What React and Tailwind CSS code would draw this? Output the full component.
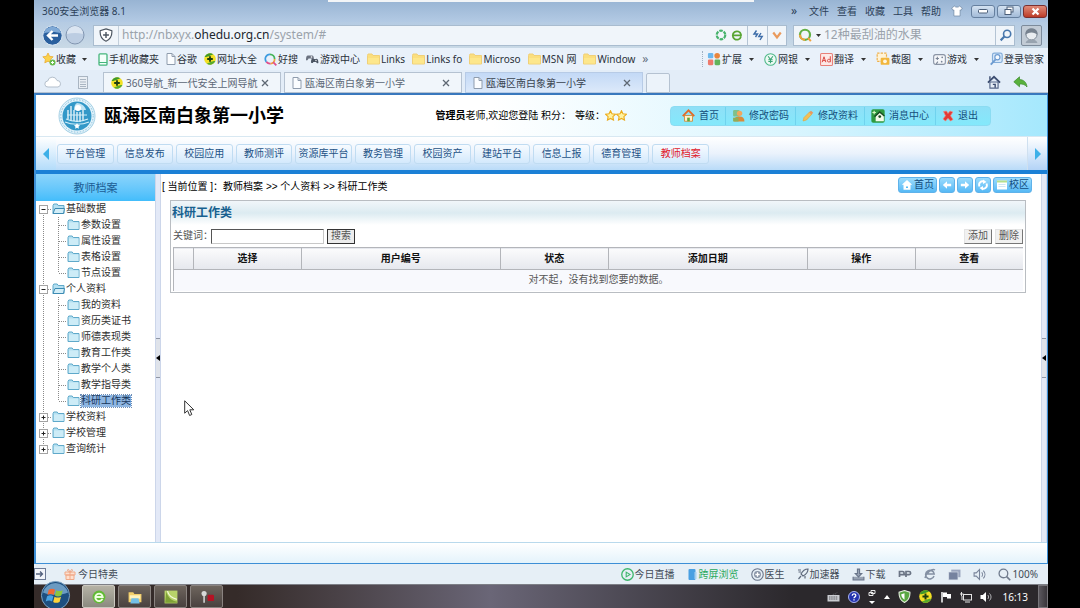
import React, { useState } from 'react';
import { clsx } from 'clsx';

/* ---------- icons ---------- */

const Svg = ({ size = 12, w, h, vb = '0 0 12 12', children, className }) => (
  <svg width={w || size} height={h || size} viewBox={vb} fill="none" className={clsx('shrink-0', className)} aria-hidden="true">
    {children}
  </svg>
);

const FolderIcon = () => (
  <Svg w={13} h={12} vb="0 0 13 12">
    <path d="M.5 2.5 1 1h4l1 1.500h6.500v8.500H.5z" fill="#fbdf7e" stroke="#f0d078" />
    <path d="M1 5h11v5.500H1z" fill="#fde78c" />
  </Svg>
);

const PageIcon = ({ color = '#8f9cad' }) => (
  <Svg w={10} h={12} vb="0 0 10 12">
    <path d="M1 .5h5l3 3v8H1z" fill="#fbfdff" stroke={color} />
    <path d="M6 .5v3h3" stroke={color} />
  </Svg>
);

const Plus360 = ({ size = 12 }) => (
  <Svg size={size}>
    <circle cx="6" cy="6" r="5.800" fill="#f2e024" />
    <path d="M.6 4A5.800 5.800 0 0 1 9.500 1.500C7 1.500 5.500 4 .6 4z" fill="#3f9a2b" />
    <path d="M11.400 8A5.800 5.800 0 0 1 2.500 10.500C5 10.500 6.500 8 11.400 8z" fill="#58ab2d" />
    <path d="M6 3.200v5.600M3.200 6h5.600" stroke="#1d3d10" strokeWidth="1.800" />
  </Svg>
);

const FavStar = () => (
  <Svg size={14} vb="0 0 14 14">
    <path d="m6 1 1.600 3.300 3.600.500-2.600 2.500.600 3.600L6 9.200l-3.200 1.700.600-3.600L.800 4.800l3.600-.500z" fill="#fbd24c" stroke="#e8a62b" strokeWidth=".7" />
    <circle cx="10.500" cy="10.500" r="3" fill="#69bb4d" />
    <path d="M9 10.500h3M10.500 9v3" stroke="#fff" />
  </Svg>
);

const PhoneIcon = () => (
  <Svg w={10} h={13} vb="0 0 10 13">
    <rect x="1" y=".8" width="8" height="11.400" rx="1" stroke="#45b57c" strokeWidth="1.300" fill="#f4fffa" />
    <path d="M1 9.500h8" stroke="#45b57c" />
  </Svg>
);

const RingSearch = ({ size = 13 }) => (
  <Svg size={size}>
    <path d="M2.200 8.200A4.300 4.300 0 0 1 5.500 1.200" stroke="#3c9be0" strokeWidth="1.600" />
    <path d="M5.500 1.200A4.300 4.300 0 0 1 9.800 5.500" stroke="#46b45a" strokeWidth="1.600" />
    <path d="M9.800 5.500A4.300 4.300 0 0 1 6 9.800" stroke="#f0a03a" strokeWidth="1.600" />
    <path d="M6 9.800A4.300 4.300 0 0 1 2.200 8.200M8.400 8.400l3 3" stroke="#e0508c" strokeWidth="1.600" />
  </Svg>
);

const GamePads = () => (
  <Svg w={14} h={12} vb="0 0 14 12">
    <path d="M1 7c0-4 1-5 2.500-4.500h3C8 2 9 3 9 7c-1 1-2 0-2.500-1.500h-3C3 7 2 8 1 7z" fill="#6b7280" />
    <path d="M6 9.500c0-3 .800-4 2-3.600h3c1.500-.400 2.400 1 2.400 4-1 1-1.800.200-2.300-1H8.400c-.600 1.400-1.500 1.500-2.400.600z" fill="#4b5563" />
    <circle cx="6.500" cy="4" r=".8" fill="#fff" /><circle cx="11" cy="7.500" r=".7" fill="#fff" />
  </Svg>
);

const BlocksIcon = () => (
  <Svg size={14}>
    <rect x=".8" y=".8" width="4.600" height="4.600" rx="1" fill="#6cb8ec" />
    <circle cx="8.700" cy="3.200" r="2.400" fill="#e8853d" />
    <rect x=".8" y="6.500" width="4.600" height="4.800" rx="1" fill="#ee7a6c" />
    <rect x="6.500" y="6.500" width="4.800" height="4.800" rx="1" fill="#62b45c" />
  </Svg>
);

const YenIcon = () => (
  <Svg size={13}>
    <circle cx="6" cy="6" r="5.300" stroke="#4fb98a" fill="#eefaf4" />
    <path d="m3.800 3 2.200 3 2.200-3M6 6v3.500M4 6.300h4M4 7.900h4" stroke="#3ca577" />
  </Svg>
);

const DictIcon = () => (
  <Svg size={13}>
    <rect x=".5" y=".5" width="11" height="11" rx="1" fill="#fde9e7" stroke="#e88079" />
    <path d="m2 8.500 1.700-5 1.700 5M2.600 7h2.200M9.500 3v5.500M9.500 6.500c-.500-1-2.700-1-2.700.600 0 1.500 2.200 1.500 2.700.400" stroke="#d9453f" strokeWidth=".9" />
  </Svg>
);

const CropIcon = () => (
  <Svg size={14}>
    <rect x="1" y="1" width="8" height="7" fill="#fff3d6" stroke="#eeb04c" strokeDasharray="2 1" />
    <rect x="4" y="5" width="7.500" height="6" rx="1" fill="#f2b63c" />
    <circle cx="7.700" cy="8" r="1.600" fill="#fff6e0" />
  </Svg>
);

const DiceIcon = () => (
  <Svg size={13}>
    <rect x=".6" y="1.500" width="10.800" height="9" rx="2" fill="#f5f7fa" stroke="#8a94a5" />
    <path d="M2.500 5h3M4 3.500v3" stroke="#7a8495" /><circle cx="8.500" cy="4" r=".8" fill="#7a8495" />
    <circle cx="8" cy="8" r=".8" fill="#7a8495" /><path d="M3 10l1.500-2" stroke="#7a8495" />
  </Svg>
);

const LoginIcon = () => (
  <Svg size={14}>
    <rect x="3" y="1" width="8.300" height="8" rx="1.500" fill="#d9e9fa" stroke="#83add9" />
    <circle cx="7.200" cy="4.500" r="2.200" fill="#f5faff" stroke="#6d9bd0" />
    <path d="m5.500 6.500-4 4.300" stroke="#6d9bd0" strokeWidth="1.600" />
  </Svg>
);

const HomeColor = ({ size = 13 }) => (
  <Svg size={size}>
    <path d="M2.300 6h7.400v5.300H2.300z" fill="#fff0c9" stroke="#d18a35" strokeWidth=".8" />
    <path d="M.7 6.500 6 1.200l5.300 5.300" stroke="#e26b28" strokeWidth="1.700" />
    <path d="M4.800 8h2.400v3.300H4.800z" fill="#5ba53b" />
  </Svg>
);

const UserColor = () => (
  <Svg size={13}>
    <rect x="1" y="1" width="6" height="6" rx="1" fill="#7fc08b" />
    <circle cx="7" cy="4" r="2.500" fill="#f0a75e" /><path d="M2 11.500C2 7.500 4 7 7 7s4.500 1.500 4.500 4.500z" fill="#d98b3b" />
    <path d="M1 8h5v3.500H1z" fill="#8dae5a" />
  </Svg>
);

const PencilColor = () => (
  <Svg size={12}>
    <path d="M1 11 2 7.500 7.500 2l2.300 2.200L4.500 10z" fill="#f2c055" stroke="#e0a23a" strokeWidth=".6" />
    <path d="M7 2.500 9 .8l2.300 2L9.600 4.600z" fill="#e8995f" />
  </Svg>
);

const MsgColor = () => (
  <Svg size={14}>
    <rect x=".3" y=".3" width="11.400" height="11.400" rx="1.500" fill="#2f9a3f" />
    <path d="M4 10.500V6l3.500-3L11 6v4.500z" fill="#f3fbe9" />
    <path d="m3 6.500 4.500-4L11.500 6" stroke="#1b4e23" strokeWidth="1.300" />
    <circle cx="7.500" cy="6.500" r="1.200" fill="#1b4e23" />
    <path d="M1.200 3h3M2.700 1.500v3" stroke="#d8f7c2" />
  </Svg>
);

const CrossColor = () => (
  <Svg size={12}>
    <path d="m1.500 1.500 3-.5L6 3.500 8 1l2.800 1L8.500 5.800 11 9.500 8.500 11 6 8.300 3.500 11 1 9l2.500-3.200z" fill="#e23b36" stroke="#f08a80" strokeWidth=".7" />
  </Svg>
);

const GoldStar = () => (
  <Svg size={11}>
    <path d="m6 .8 1.600 3.400 3.700.500-2.700 2.600.700 3.700L6 9.200 2.700 11l.700-3.700L.700 4.700l3.700-.500z" fill="#fff3a0" stroke="#ecab1c" strokeWidth="1.200" />
  </Svg>
);

const SchoolLogo = () => (
  <Svg size={38} vb="0 0 38 38">
    <circle cx="19" cy="19" r="18" fill="#e3f3fb" stroke="#a5d0e5" />
    <circle cx="19" cy="19" r="16.200" stroke="#86bfdb" strokeDasharray="1.500 1.500" />
    <circle cx="19" cy="19" r="14.500" fill="#3398c8" />
    <path d="M19 6c4 0 8 3 9 7H16c0-3 1-6 3-7z" fill="#bfe4f4" />
    <circle cx="20" cy="11" r="3" fill="#fff" />
    <path d="M13 9v15M16 13v11M19 15v10M22 15v10M25 13v11M10 13v9" stroke="#fff" strokeWidth="1.200" />
    <path d="M9 18h20M8 22c7 3 15 3 22 0M7 25c7 3 17 3 24 0" stroke="#d3effa" strokeWidth="1.200" />
    <path d="m19 26 1 2 2 .3-1.500 1.400.4 2.100-1.900-1-1.900 1 .4-2.100L16 28.300l2-.3z" fill="#fff" />
  </Svg>
);

const TreeFolder = ({ open }) => (
  <Svg w={13} h={12} vb="0 0 13 12">
    <path d="M1 2.500 1.800 1h3.400l1 1.500H12v8H1z" fill="#b5e0f1" stroke="#5fa9ca" />
    {open
      ? <path d="M1 10.500 3 5.500h9.500l-1 5z" fill="#d3eef8" stroke="#3c8bb3" />
      : <path d="M2 3.500h9.500V10H2z" fill="#cdecf7" />}
  </Svg>
);

const Caret = () => (
  <Svg w={5} h={3} vb="0 0 5 3"><path d="M0 0h5L2.500 3z" fill="#333" /></Svg>
);

/* ---------- data ---------- */

const MENU = ['文件', '查看', '收藏', '工具', '帮助'];

const BOOKMARKS = [
  { label: '手机收藏夹', icon: PhoneIcon },
  { label: '谷歌', icon: PageIcon },
  { label: '网址大全', icon: Plus360 },
  { label: '好搜', icon: RingSearch },
  { label: '游戏中心', icon: GamePads },
  { label: 'Links', icon: FolderIcon },
  { label: 'Links fo', icon: FolderIcon },
  { label: 'Microso', icon: FolderIcon },
  { label: 'MSN 网', icon: FolderIcon },
  { label: 'Window', icon: FolderIcon },
];

const TOOLS = [
  { label: '扩展', icon: BlocksIcon, caret: true },
  { label: '网银', icon: YenIcon, caret: true },
  { label: '翻译', icon: DictIcon, caret: true },
  { label: '截图', icon: CropIcon, caret: true },
  { label: '游戏', icon: DiceIcon, caret: true },
  { label: '登录管家', icon: LoginIcon },
];

const TABS = [
  { label: '360导航_新一代安全上网导航', icon: Plus360 },
  { label: '瓯海区南白象第一小学', icon: PageIcon },
  { label: '瓯海区南白象第一小学', icon: PageIcon, active: true },
];

const QUICK = [
  { label: '首页', icon: HomeColor },
  { label: '修改密码', icon: UserColor },
  { label: '修改资料', icon: PencilColor },
  { label: '消息中心', icon: MsgColor },
  { label: '退出', icon: CrossColor },
];

const NAV = ['平台管理', '信息发布', '校园应用', '教师测评', '资源库平台', '教务管理', '校园资产', '建站平台', '信息上报', '德育管理', '教师档案'];

const TREE = [
  { label: '基础数据', children: ['参数设置', '属性设置', '表格设置', '节点设置'] },
  { label: '个人资料', children: ['我的资料', '资历类证书', '师德表现类', '教育工作类', '教学个人类', '教学指导类', '科研工作类'] },
  { label: '学校资料' },
  { label: '学校管理' },
  { label: '查询统计' },
];

const COLUMNS = [
  { label: '', width: 'w-[20px]' },
  { label: '选择', width: 'w-[13%]' },
  { label: '用户编号', width: 'w-[24%]' },
  { label: '状态', width: 'w-[13%]' },
  { label: '添加日期', width: 'w-[24%]' },
  { label: '操作', width: 'w-[13%]' },
  { label: '查看', width: 'w-[13%]' },
];

/* ---------- browser chrome ---------- */

function TitleBar() {
  return (
    <div className="relative flex h-[22px] shrink-0 items-center bg-linear-to-b from-[#98b4d3] to-[#b3cae4] pl-2 text-[#2c3f58]">
      <div className="absolute left-[29%] right-[29%] top-0 h-[2px] bg-[#f3f5f7]" />
      <span className="text-[10px] leading-4">360安全浏览器 8.1</span>
      <div className="ml-auto flex items-center gap-2">
        <button className="mr-1 text-[12px] leading-4">»</button>
        {MENU.map((m) => <button key={m} className="text-[10px] leading-4">{m}</button>)}
        <Svg size={12} className="ml-[2px]">
          <path d="M3.500 1 .7 3l1.200 2.300 1-.4V11h6.200V4.900l1 .4L11.300 3 8.500 1C8 2.500 4 2.500 3.500 1z" fill="#fff" stroke="#6e86a4" strokeWidth=".7" />
        </Svg>
      </div>
      <div className="ml-2 flex gap-[2px] pr-px">
        <button aria-label="最小化" className="flex h-[13px] w-6 items-center justify-center rounded-[3px] border border-[#66809f] bg-linear-to-b from-[#d4e2f1] to-[#a2bbd8]">
          <Svg w={10} h={5} vb="0 0 10 5"><rect x=".5" y=".5" width="9" height="3.500" rx="1" fill="#fff" stroke="#4a5e78" /></Svg>
        </button>
        <button aria-label="还原" className="flex h-[13px] w-6 items-center justify-center rounded-[3px] border border-[#66809f] bg-linear-to-b from-[#d4e2f1] to-[#a2bbd8]">
          <Svg size={10} vb="0 0 10 10"><rect x="3" y="1" width="6" height="5" fill="#fff" stroke="#4a5e78" /><rect x="1" y="3.500" width="6" height="5" fill="#fff" stroke="#4a5e78" /></Svg>
        </button>
        <button aria-label="关闭" className="flex h-[13px] w-6 items-center justify-center rounded-[3px] border border-[#7a3030] bg-linear-to-b from-[#e08a78] to-[#bb3a26]">
          <Svg size={9} vb="0 0 9 9"><path d="m1.500 1.500 6 6m0-6-6 6" stroke="#fff" strokeWidth="2.200" /></Svg>
        </button>
      </div>
    </div>
  );
}

function AddressBar() {
  return (
    <div className="flex h-[26px] shrink-0 items-center bg-linear-to-b from-[#b5cbe3] to-[#c9d9e6] pl-2 pr-[6px]">
      <button aria-label="后退">
        <Svg size={21} vb="0 0 21 21">
          <circle cx="10.500" cy="10.500" r="9.700" fill="#2a5f9e" stroke="#dce8f4" />
          <path d="M1.800 8.500a9 9 0 0 1 17.400 0C14 6.500 7 6.500 1.800 8.500z" fill="#7fa9d6" />
          <path d="M16 10.500H7M10.500 6 6 10.500l4.500 4.500" stroke="#fff" strokeWidth="2.400" />
        </Svg>
      </button>
      <button aria-label="前进" className="ml-[2px]">
        <Svg size={20} vb="0 0 20 20">
          <circle cx="10" cy="10" r="9" fill="#bccde2" stroke="#8195b0" />
          <path d="M2 9a8 8 0 0 1 16 0c-5-1.500-11-1.500-16 0z" fill="#dbe5f1" />
        </Svg>
      </button>
      <div className="ml-2 flex h-[21px] flex-1 items-stretch border border-[#a9bccf] bg-[#f0f5fa]">
        <div className="flex w-[25px] items-center justify-center border-r border-[#c3cfdb]">
          <Svg size={14}>
            <path d="M6 .8 11 2.300c.300 4-1 7.300-5 9-4-1.700-5.300-5-5-9z" fill="#fff" stroke="#4c5560" />
            <path d="M6 3.500v5M3.500 6h5" stroke="#4c5560" strokeWidth="1.200" />
          </Svg>
        </div>
        <div className="relative flex-1">
          <input aria-label="网址" className="absolute inset-0 w-full bg-transparent text-transparent outline-none" />
          <span className="pointer-events-none flex h-full items-center whitespace-pre pl-[3px] text-[12px] leading-4 text-[#9ba3ab]">
            http://nbxyx.<span className="text-[#20262e]">ohedu.org.cn</span>/system/#
          </span>
        </div>
        <div className="flex items-center gap-1 pr-1">
          <Svg size={12}><circle cx="6" cy="6" r="4.300" stroke="#47b36c" strokeWidth="2.200" strokeDasharray="3.500 1" /></Svg>
          <Svg size={12}>
            <path d="M10 7.500A4.200 4.200 0 1 1 10 5.500v.9H2.500" stroke="#58a532" strokeWidth="1.700" />
          </Svg>
        </div>
        <button aria-label="极速模式" className="flex w-5 items-center justify-center border-l border-[#b4c4d4]">
          <Svg size={12}><path d="M4.500 1.500 2 5h3.500L3.500 8M9 4 6.800 7.500h3.400L8 11" stroke="#3c6ca8" strokeWidth="1.400" /></Svg>
        </button>
        <button aria-label="展开" className="flex w-[19px] items-center justify-center border-l border-[#b4c4d4]">
          <Svg size={10}><path d="m1.500 3 4.500 6 4.500-6" stroke="#ea9a5c" strokeWidth="2.600" /></Svg>
        </button>
      </div>
      <div className="ml-[6px] flex h-[21px] w-[222px] items-stretch border border-[#a9bccf] bg-[#f0f5fa]">
        <button aria-label="搜索引擎" className="flex w-[30px] items-center justify-center gap-1">
          <Svg size={14}>
            <circle cx="6" cy="5.800" r="4.300" stroke="#62b046" strokeWidth="1.900" />
            <path d="M1.700 5.800A4.300 4.300 0 0 0 6 10.100" stroke="#f1a23c" strokeWidth="1.900" />
            <path d="m8.500 8.500 2.500 2.800" stroke="#f1a23c" strokeWidth="1.700" />
          </Svg>
          <Caret />
        </button>
        <input aria-label="搜索" placeholder="12种最刮油的水果" className="min-w-0 flex-1 bg-transparent text-[12px] leading-4 outline-none placeholder:text-[#9aa2ab]" />
        <button aria-label="搜索" className="flex w-[19px] items-center justify-center border-l border-[#b4c4d4]">
          <Svg size={13}><circle cx="7.500" cy="4.500" r="3.300" stroke="#4777ad" strokeWidth="1.500" /><path d="M5 7 1.500 10.500" stroke="#4777ad" strokeWidth="2" /></Svg>
        </button>
      </div>
      <button aria-label="账户" className="ml-[6px] flex size-[21px] items-center justify-center rounded-[2px] border border-[#7d8b9b] bg-[#c2cbd5]">
        <Svg size={17} vb="0 0 17 17">
          <ellipse cx="8.500" cy="7.500" rx="5.500" ry="5.500" fill="#e9edf1" stroke="#7b8794" />
          <path d="M2.500 8C2 3 5 1.500 8.500 1.500S15 3 14.500 8C12 4.500 5 4.500 2.500 8z" fill="#77828f" />
          <path d="M2.500 16c1-3 3-3.500 6-3.500s5 .5 6 3.500z" fill="#98a3af" />
        </Svg>
      </button>
    </div>
  );
}

function BookmarkBar() {
  return (
    <div className="flex h-[22px] shrink-0 items-center whitespace-nowrap bg-[#e9f1fa] pl-2 pr-1 text-[10px] leading-4 text-[#2b323b]">
      <button className="flex items-center"><FavStar />收藏<span className="ml-[6px]"><Caret /></span></button>
      <div className="ml-[11px] flex items-center gap-[7px]">
        {BOOKMARKS.map(({ label, icon: Icon }) => (
          <a key={label} href="#" className="flex items-center gap-px"><Icon />{label}</a>
        ))}
        <button aria-label="更多书签" className="text-[12px] text-[#657080]">»</button>
      </div>
      <div className="ml-auto flex items-center gap-[10px] border-l border-dotted border-[#9fb0c2] pl-1">
        {TOOLS.map(({ label, icon: Icon, caret }) => (
          <button key={label} className="flex items-center gap-px">
            <Icon />{label}{caret && <span className="ml-[6px]"><Caret /></span>}
          </button>
        ))}
      </div>
    </div>
  );
}

function TabStrip() {
  return (
    <div className="flex h-[23px] shrink-0 items-end bg-[#e3edf8] text-[10px] leading-4 text-[#5b6675]">
      <div className="flex h-[21px] w-[69px] shrink-0 items-center gap-4 border-b border-[#b5c2d1] pl-[10px]">
        <Svg w={18} h={12} vb="0 0 18 12"><path d="M4 11a3 3 0 0 1-.3-6A4.800 4.800 0 0 1 13 4.500 3.300 3.300 0 0 1 14 11z" fill="#fff" stroke="#b3bfcc" /></Svg>
        <Svg w={10} h={13} vb="0 0 10 13"><rect x=".5" y=".5" width="9" height="12" fill="#e9eef4" stroke="#a9b5c2" /><path d="M2 3.500h6M2 6h6M2 8.500h6M2 10.500h6" stroke="#a9b5c2" /></Svg>
      </div>
      {TABS.map(({ label, icon: Icon, active }, i) => (
        <div
          key={i}
          className={clsx(
            'mr-[3px] flex h-[21px] w-[178px] items-center gap-[3px] border px-[7px]',
            active ? 'border-[#b7cbe6] bg-linear-to-b from-[#c3d9f6] to-[#dce9fa] text-[#39424e]' : 'border-[#b5c2d1] bg-[#f1f6fb]',
          )}
        >
          <Icon />
          <button className="whitespace-nowrap">{label}</button>
          <button aria-label="关闭标签" className="ml-auto pr-1">
            <Svg size={8} vb="0 0 8 8"><path d="m1 1 6 6m0-6-6 6" stroke="#5e6873" strokeWidth="1.300" /></Svg>
          </button>
        </div>
      ))}
      <button aria-label="新标签" className="h-5 w-6 rounded-t-[2px] border border-[#b5c2d1] bg-[#ecf3fa]" />
      <div className="flex h-[21px] flex-1 items-center justify-end gap-3 border-b border-[#b5c2d1] pr-5">
        <Svg size={14}>
          <path d="M2.500 6h7v5.300h-7z" fill="#e5edf6" stroke="#56688a" /><path d="M.8 6.500 6 1.500l5.200 5" stroke="#3c4d70" strokeWidth="1.500" />
          <path d="M2.500 1v3M5 8h2v3" stroke="#3c4d70" strokeWidth="1.200" />
        </Svg>
        <Svg w={15} h={12} vb="0 0 15 12"><path d="M6.500.8v2.700c4 .2 7 2.500 7.500 7.500C12 8.500 10 8 6.500 8v2.800L.8 5.800z" fill="#59b13d" stroke="#3b8c2b" strokeWidth=".7" /></Svg>
      </div>
    </div>
  );
}

/* ---------- page ---------- */

function PageHeader() {
  return (
    <header className="flex h-[42px] shrink-0 items-center border-b border-[#d8e8f2] bg-linear-to-r from-white from-45% via-[#d9f5fe] via-75% to-[#a5e8fd] pl-[22px] pr-14">
      <SchoolLogo />
      <h1 className="ml-2 whitespace-nowrap text-[18px] font-bold leading-6 text-black">瓯海区南白象第一小学</h1>
      <p className="ml-auto mr-[43px] flex items-center whitespace-nowrap text-[10px] leading-4 text-black">
        <b>管理员</b>老师,欢迎您登陆 积分：<span className="ml-1">等级：</span><GoldStar /><GoldStar />
      </p>
      <div className="flex h-5 items-center rounded-[4px] border border-[#8bdcf2] bg-linear-to-b from-[#8fe0f7] to-[#83e9fb] text-[10px] leading-4 text-[#154f7c]">
        {QUICK.map(({ label, icon: Icon }, i) => (
          <a key={label} href="#" className={clsx('flex h-[18px] items-center gap-1 px-[6px] whitespace-nowrap first:pl-[11px] last:pr-3', i > 0 && 'border-l border-[#70d3ee]')}>
            <Icon />{label}
          </a>
        ))}
      </div>
    </header>
  );
}

function NavBar() {
  const [active, setActive] = useState('教师档案');
  return (
    <nav className="flex h-[37px] shrink-0 border-b-4 border-[#1b80d6] bg-linear-to-b from-white via-[#eaf2fc] to-[#b9dbf8]">
      <button aria-label="向左滚动" className="flex w-5 items-center justify-center bg-linear-to-b from-white to-[#b3dcfa]">
        <Svg w={6} h={12} vb="0 0 6 12"><path d="M6 0v12L0 6z" fill="#3db0e8" /></Svg>
      </button>
      <div className="my-auto ml-px grid w-[652px] grid-cols-11 gap-[3px]">
        {NAV.map((n) => (
          <button
            key={n}
            onClick={() => setActive(n)}
            className={clsx(
              'h-5 whitespace-nowrap rounded-[3px] border border-[#c0dcf2] bg-linear-to-b from-[#f7fbff] to-[#d3e9fc] text-[10px] leading-4',
              n === active ? 'text-[#e0202c]' : 'text-[#1d5286]',
            )}
          >
            {n}
          </button>
        ))}
      </div>
      <button aria-label="向右滚动" className="ml-auto flex w-5 items-center justify-center border-l border-[#cfe0f0] bg-linear-to-b from-white to-[#b3d3f6]">
        <Svg w={6} h={12} vb="0 0 6 12"><path d="M0 0v12l6-6z" fill="#3db0e8" /></Svg>
      </button>
    </nav>
  );
}

const Dots = (props) => <path stroke="#8a8a8a" strokeDasharray="1 1" {...props} />;

function TreeRow({ label, open, hasBox, first, last, lastRoot, selected, onClick }) {
  return (
    <li className="flex h-4 items-center">
      {hasBox ? (
        <Svg w={16} h={16} vb="0 0 16 16">
          {!first && <Dots d="M7.500 0v8" />}
          {!lastRoot && <Dots d="M7.500 8v8" />}
          <Dots d="M12 8.500h4" />
          <rect x="3.500" y="4.500" width="8" height="8" fill="#fff" stroke="#a3a3a3" />
          <path d="M5.500 8.500h4" stroke="#222" />
          {!open && <path d="M7.500 6.500v4" stroke="#222" />}
        </Svg>
      ) : (
        <Svg w={31} h={16} vb="0 0 31 16">
          <Dots d="M7.500 0v16" />
          <Dots d={last ? 'M22.500 0v8' : 'M22.500 0v16'} />
          <Dots d="M23 8.500h7" />
        </Svg>
      )}
      <TreeFolder open={open} />
      <button onClick={onClick} className={clsx('ml-px whitespace-nowrap text-[10px]', selected ? 'bg-[#8fb6e2] leading-3 text-[#16355c] outline outline-dotted outline-[#6e8db5]' : 'leading-4 text-[#2f2f2f]')}>
        {label}
      </button>
    </li>
  );
}

function Sidebar() {
  const [selected, setSelected] = useState('科研工作类');
  const [opened, setOpened] = useState({ 基础数据: true, 个人资料: true });
  return (
    <aside className="w-[119px] shrink-0 bg-white">
      <h2 className="flex h-[27px] items-center justify-center bg-linear-to-b from-[#8bd4fb] to-[#42bdfb] text-[11px] leading-4 text-[#1b5c94]">教师档案</h2>
      <ul>
        {TREE.map((node, i) => (
          <React.Fragment key={node.label}>
            <TreeRow
              label={node.label}
              hasBox
              open={!!opened[node.label]}
              first={i === 0}
              lastRoot={i === TREE.length - 1}
              onClick={() => setOpened({ ...opened, [node.label]: !opened[node.label] })}
            />
            {opened[node.label] && node.children?.map((c, j) => (
              <TreeRow key={c} label={c} last={j === node.children.length - 1} selected={c === selected} onClick={() => setSelected(c)} />
            ))}
          </React.Fragment>
        ))}
      </ul>
    </aside>
  );
}

const Splitter = () => (
  <div className="flex w-[6px] shrink-0 items-center border-x border-[#ccd6ea] bg-[#e3e9f7]">
    <button aria-label="折叠面板" className="flex h-10 w-full items-center justify-center border-y border-[#8f96a5] bg-[#dfe3ea]">
      <Svg w={4} h={6} vb="0 0 4 6"><path d="M4 0v6L0 3z" fill="#000" /></Svg>
    </button>
  </div>
);

function MiniButton({ label, name, children }) {
  return (
    <button aria-label={name} className={clsx('flex h-4 items-center justify-center rounded-[3px] border border-[#5fb2ea] bg-linear-to-b from-[#9bdcfd] to-[#55b9f5] text-[10px] leading-3 text-[#134c7e]', label ? 'gap-px px-[2px]' : 'w-4')}>
      {children}{label}
    </button>
  );
}

function Breadcrumb() {
  return (
    <div className="flex h-[26px] items-center justify-between pl-px pr-[9px] text-[10px] leading-4 text-black">
      <p className="whitespace-nowrap">[ 当前位置 ]：教师档案 &gt;&gt; 个人资料 &gt;&gt; 科研工作类</p>
      <div className="flex items-center gap-[2px] pb-1">
        <MiniButton label="首页">
          <Svg size={12}><path d="M6 1 .8 5.800h1.700v5h7v-5h1.700z" fill="#fff" /><path d="M5 7.500h2V9H5z" fill="#55b9f5" /></Svg>
        </MiniButton>
        <MiniButton name="后退"><Svg size={10}><path d="M11 4.500H6V1.500L1 6l5 4.500v-3h5z" fill="#fff" /></Svg></MiniButton>
        <MiniButton name="前进"><Svg size={10}><path d="M1 4.500h5V1.500L11 6l-5 4.500v-3H1z" fill="#fff" /></Svg></MiniButton>
        <MiniButton name="刷新">
          <Svg size={12}><path d="M2.500 7.500C1 4 4 1.500 7 2.500M9.500 4.500C11 8 8 10.500 5 9.500" stroke="#fff" strokeWidth="1.900" /><path d="M6 .5 9.500 3 6 5zM6 7 2.500 9 6 11.500z" fill="#fff" /></Svg>
        </MiniButton>
        <MiniButton label="校区">
          <Svg size={12}><rect x="1" y="1.500" width="10" height="9" fill="#fff" /><path d="M1 2.500h10" stroke="#b6df8d" strokeWidth="2" /><path d="M2.500 5.500h7M2.500 7.500h7" stroke="#cfe6f4" /></Svg>
        </MiniButton>
      </div>
    </div>
  );
}

function Panel() {
  return (
    <section className="ml-[9px] mr-[15px] border border-[#b9bdc2] px-[2px] pb-px">
      <h3 className="-mx-[2px] flex h-6 items-center bg-linear-to-b from-[#f1f6fa] via-[#dcebf1] to-white pl-px text-[12px] font-bold leading-4 text-[#17608f]">科研工作类</h3>
      <div className="flex h-[22px] items-center text-[10px] leading-3 text-[#555]">
        <label htmlFor="keyword" className="-mr-[2px]">关键词：</label>
        <input id="keyword" className="h-[15px] w-[113px] border border-[#c8c8c8] border-l-[#555] border-t-[#555] bg-white px-1 text-[10px] text-black outline-none" />
        <button className="ml-[3px] h-[15px] border border-[#333] bg-[#ececec] px-[3px]">搜索</button>
        <button className="ml-auto h-[15px] border border-[#e4e4e4] border-b-[#777] border-r-[#777] bg-[#f1f1f1] px-[3px]">添加</button>
        <button className="ml-[3px] h-[15px] border border-[#e4e4e4] border-b-[#777] border-r-[#777] bg-[#f1f1f1] px-[3px]">删除</button>
      </div>
      <table className="w-full table-fixed border-collapse text-center text-[10px] leading-4">
        <thead>
          <tr className="h-[22px] border-y border-[#b3b5ba] bg-linear-to-b from-[#fbfbfc] to-[#e6e8ee]">
            {COLUMNS.map((c, i) => (
              <th key={i} scope="col" className={clsx(c.width, 'border-l border-[#b3b5ba] font-bold text-[#111]')}>{c.label}</th>
            ))}
          </tr>
        </thead>
        <tbody>
          <tr className="h-[21px] bg-[#f8f9fd]">
            <td colSpan={COLUMNS.length} className="border-l border-[#b3b5ba] text-[#555]">对不起，没有找到您要的数据。</td>
          </tr>
        </tbody>
      </table>
    </section>
  );
}

/* ---------- bottom bars ---------- */

const STATUS = [
  { label: '今日直播', icon: <Svg size={13}><circle cx="6" cy="6" r="5.300" stroke="#3eb66c" strokeWidth="1.200" /><path d="m4.800 3.800 3.500 2.200-3.500 2.200z" stroke="#3eb66c" /></Svg> },
  { label: '跨屏浏览', green: true, icon: <Svg w={11} h={13} vb="0 0 11 13"><rect x="1.500" y="1" width="7" height="11" rx="1" fill="#4aa0e2" /><path d="M8.500 4v7" stroke="#a8cfee" strokeWidth="2" /></Svg> },
  { label: '医生', icon: <Svg size={13}><circle cx="6" cy="6" r="5.300" stroke="#69758a" /><circle cx="6" cy="6" r="3.200" fill="#8792a5" /><path d="M6 4v4M4 6h4" stroke="#fff" strokeWidth="1.200" /></Svg> },
  { label: '加速器', icon: <Svg size={12}><path d="M11 1C7 1 5.500 3 4 6l2 2c3-1.500 5-3 5-7zM4 4H1.500M8 8v2.500M4 8l-2.500 3M1 2h3" stroke="#5f6a7c" strokeWidth="1.200" /></Svg> },
  { label: '下载', icon: <Svg size={13}><path d="M5 1h2v4h2L6 8.200 3 5h2zM1 8v3h10V8" stroke="#69758a" fill="#98a3b3" /></Svg> },
];

function StatusBar() {
  return (
    <div className="flex h-5 shrink-0 items-center whitespace-nowrap bg-[#e6eff6] pr-[10px] text-[10px] leading-4 text-[#424b57]">
      <button aria-label="侧边栏"><Svg size={12}><rect x=".5" y=".5" width="11" height="11" fill="#f2f5fa" stroke="#6d7b96" /><path d="M2 6h6M6 3.500 8.500 6 6 8.500" stroke="#54627e" strokeWidth="1.300" /></Svg></button>
      <a href="#" className="ml-[18px] flex items-center gap-[2px]">
        <Svg size={12}><path d="M1 4h10v3H1zM2 7h8v4.500H2z" fill="#fde0cf" stroke="#f0a988" /><path d="M6 4v7M6 4C3 4 3 1 4.500 1.500L6 4l1.500-2.500C9 1 9 4 6 4" stroke="#f0a988" /></Svg>
        今日特卖
      </a>
      <div className="ml-auto flex items-center gap-3">
        {STATUS.map(({ label, icon, green }) => (
          <button key={label} className={clsx('flex items-center gap-px', green && 'text-[#2aa95c]')}>{icon}{label}</button>
        ))}
        <button aria-label="手柄"><Svg w={14} h={12} vb="0 0 14 12"><path d="M1.500 9V3.500h3a1.500 1.500 0 0 1 0 3.200h-3M8 9V3.500h3a1.500 1.500 0 0 1 0 3.200H5" stroke="#6a7484" strokeWidth="1.700" /></Svg></button>
        <button aria-label="兼容模式"><Svg size={12}><path d="M10 8A4.300 4.300 0 1 1 10.200 6H3M1 10C2 5 8 0 11 2" stroke="#8490a3" strokeWidth="1.500" /></Svg></button>
        <button aria-label="窗口"><Svg size={13}><rect x="3" y="1.500" width="8.500" height="7" fill="#9ba5be" /><rect x=".7" y="3.700" width="8.500" height="7.300" fill="#76829f" stroke="#dbe2ec" strokeWidth=".6" /></Svg></button>
        <button aria-label="声音"><Svg size={13}><path d="M1 4.500h2L6 1.500v9l-3-3H1zM8 4c1 1 1 3 0 4M9.500 2.500c2 2 2 5 0 7" stroke="#79849a" /></Svg></button>
        <button className="flex items-center gap-[2px] text-[10px]">
          <Svg size={13}><circle cx="5" cy="5" r="4" stroke="#717c8e" strokeWidth="1.200" /><path d="m8 8 3.300 3.300" stroke="#717c8e" strokeWidth="1.600" /></Svg>
          100%
        </button>
      </div>
    </div>
  );
}

const TaskButton = ({ name, bright, children }) => (
  <button aria-label={name} className={clsx('flex h-[23px] w-[33px] items-center justify-center rounded-[2px] border', bright ? 'border-[#cbc8c0] bg-linear-to-b from-[#b5b2a5] to-[#8b8a80]' : 'border-[#8a8380] bg-linear-to-b from-[#6e655d] to-[#49413f]')}>
    {children}
  </button>
);

function Taskbar() {
  return (
    <div className="flex h-6 shrink-0 items-center border-t border-[#7d7f86] bg-linear-to-r from-[#352b29] from-20% via-[#6a6677] via-45% to-[#2b282c] to-75% pl-[6px]">
      <button aria-label="开始" className="relative -top-[2px] -my-2">
        <Svg size={31} vb="0 0 32 32">
          <circle cx="16" cy="17" r="14.500" fill="#1d4f80" stroke="#7fa5c4" />
          <path d="M3 14a13.500 13.500 0 0 1 26 0c-7 3-19 3-26 0z" fill="#6b9bc2" />
          <path d="M9 11c2.500-1.500 4.500-1.200 6.500 0l-1.300 5.500c-2-1.200-4-1.300-6.500 0z" fill="#ef6a35" />
          <path d="M16.700 11.500c2 1.200 4.200 1.300 6.800 0L22 17c-2.500 1.300-4.700 1.200-6.600 0z" fill="#8cc63f" />
          <path d="M7.300 17.700c2.500-1.300 4.500-1.200 6.500 0l-1.400 5.500c-2-1.200-4-1.200-6.500 0z" fill="#49a3e2" />
          <path d="M15 18.200c2 1.200 4.100 1.300 6.700 0l-1.500 5.500c-2.500 1.300-4.700 1.200-6.600 0z" fill="#fdd33a" />
        </Svg>
      </button>
      <div className="ml-[11px] flex gap-[3px]">
        <TaskButton name="浏览器" bright>
          <Svg size={14}><circle cx="6" cy="6" r="5.500" fill="#62bb35" /><path d="M9 7.500A3.200 3.200 0 1 1 9.200 6H3" stroke="#efffe0" strokeWidth="1.600" /></Svg>
        </TaskButton>
        <TaskButton name="资源管理器">
          <Svg size={14}><path d="M.5 2h4l1 1.500h6v7H.5z" fill="#f4cf6a" /><path d="M1.500 4.500h9v3h-9z" fill="#fff2bd" /><path d="M3 7h6l1 4.500H2z" fill="#74bfe6" /></Svg>
        </TaskButton>
        <TaskButton name="绘图">
          <Svg size={14}><rect x=".5" y=".5" width="11" height="11" fill="#b8d36a" /><path d="M2 1c1 5 4 8 9.500 9L11 11H1z" fill="#7fa136" /><path d="M3 1c1 4 4 6 8 7" stroke="#f4fadb" /></Svg>
        </TaskButton>
        <TaskButton name="录制">
          <Svg size={14}><circle cx="3.500" cy="3" r="2.200" fill="#d8d8d8" /><path d="M3.500 5v6" stroke="#d8d8d8" strokeWidth="1.300" /><rect x="6.500" y="4" width="5.500" height="5.500" rx="1" fill="#b51224" /></Svg>
        </TaskButton>
      </div>
      <div className="ml-auto flex items-center gap-2 text-white">
        <Svg w={13} h={10} vb="0 0 13 10"><rect x=".5" y="3" width="12" height="6.500" fill="#c9cbd0" /><path d="M2 5h9M2 7h9M6 3c0-2 3 0 4-2.500" stroke="#5c5c60" strokeDasharray="1.500 .7" /></Svg>
        <Svg size={12}><circle cx="6" cy="6" r="5.500" fill="#2333ae" stroke="#aab3ef" /><path d="M4.200 4.700c0-2.500 3.600-2.500 3.600-.2C7.800 6 6 5.800 6 7.300M6 8.300v1.300" stroke="#fff" strokeWidth="1.300" /></Svg>
        <Svg w={8} h={16} vb="0 0 8 16"><path d="M3 1.500h4v3H3zM1 3.500h4v3H1z" stroke="#e8e8e8" /><path d="M1 12h6l-3 3z" fill="#fff" /></Svg>
        <Svg w={6} h={4} vb="0 0 6 4"><path d="M0 4h6L3 0z" fill="#fff" /></Svg>
        <Svg size={13}><path d="M6 .5 11 2c.3 4.500-1 7.500-5 9.500C2 9.500.7 6.500 1 2z" fill="#5aa743" stroke="#e5eddf" /><path d="M6 3v6c-2-1.200-3-3-3-5z" fill="#fff" /></Svg>
        <Plus360 size={13} />
        <Svg size={12}><path d="M2 1v10.500" stroke="#fff" strokeWidth="1.500" /><path d="M3 1.500h4v1.500h4v4.500H7V6H3z" fill="#fff" /></Svg>
        <Svg size={12}><rect x="3.500" y="3.500" width="8" height="5.500" stroke="#e4e4e4" /><path d="M5 11h5M1.500 1v4M0 3h3.500M2 5v4" stroke="#e4e4e4" /></Svg>
        <Svg size={12}><path d="M.5 4h2.300L6 1v10L2.800 8H.5z" fill="#fff" /><path d="M7.800 4c1 1 1 3 0 4M9.500 2.500c2 2 2 5 0 7" stroke="#b9b9bc" /></Svg>
        <time className="mx-[2px] text-[10px] leading-4">16:13</time>
        <button aria-label="显示桌面" className="h-[23px] w-[10px] border border-[#77757a] bg-linear-to-r from-[#5b585e] to-[#39363b]" />
      </div>
    </div>
  );
}

export default function App() {
  return (
    <div className="relative h-screen overflow-hidden bg-black pl-[34px] pr-8 font-['Noto_Sans','Noto_Sans_CJK_SC',sans-serif]">
      <div className="flex h-full flex-col">
        <TitleBar />
        <AddressBar />
        <BookmarkBar />
        <TabStrip />
        <div className="flex min-h-0 flex-1 flex-col border-b border-l-2 border-r border-t-2 border-[#3d8fd6] border-t-[#3978bd] bg-white font-['Liberation_Sans','Noto_Sans_CJK_SC',sans-serif]">
          <PageHeader />
          <NavBar />
          <div className="flex min-h-0 flex-1">
            <Sidebar />
            <Splitter />
            <main className="min-w-0 flex-1 bg-white">
              <Breadcrumb />
              <Panel />
            </main>
            <Splitter />
          </div>
          <footer className="h-[21px] shrink-0 border-t border-[#b9d9ec] bg-linear-to-b from-white to-[#e4f3fb]" />
        </div>
        <StatusBar />
        <Taskbar />
      </div>
      {/* mouse pointer */}
      <svg width="11" height="17" viewBox="0 0 11 17" className="pointer-events-none absolute left-[184px] top-[400px]" aria-hidden="true">
        <path d="M.7.8v12.400l2.900-2.600 2 4.900 2.200-1-2-4.700h4z" fill="#fff" stroke="#333" />
      </svg>
    </div>
  );
}
